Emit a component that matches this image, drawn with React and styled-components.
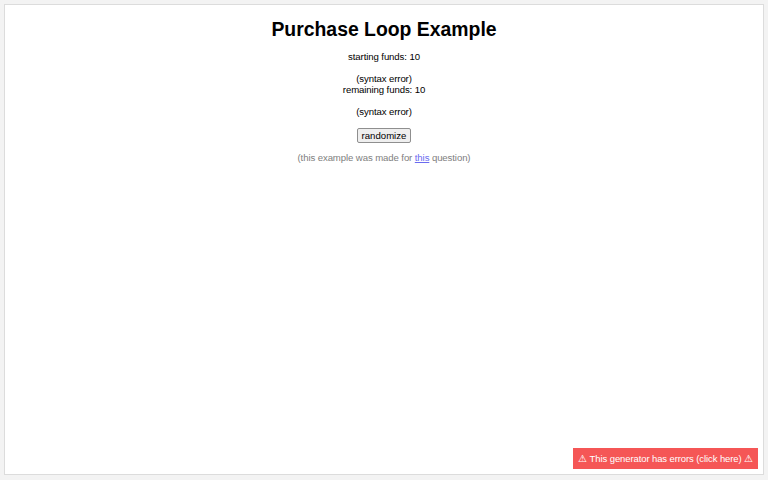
import React from 'react';
import styled, { createGlobalStyle } from 'styled-components';

const Global = createGlobalStyle`
    html, body {
        margin: 0;
        padding: 0;
        background: #f3f3f3;
        font-family: "Liberation Sans", Arial, sans-serif;
    }
`

const Page = styled.div`
    box-sizing: border-box;
    height: 100vh;
    padding: 4px 4px 5px 4px;
`

const Panel = styled.div`
    box-sizing: border-box;
    height: 100%;
    background: #ffffff;
    border: 1px solid #dcdcdc;
    text-align: center;
    padding-top: 13px;
`

const Title = styled.h1`
    margin: 0 0 11px;
    font-size: 19.4px;
    line-height: 22px;
    font-weight: bold;
    color: #000;
`

const Output = styled.div`
    font-size: 9.6px;
    line-height: 11px;
    color: #000;
    letter-spacing: -0.1px;
`

const Button = styled.button`
    margin-top: 11px;
    font-family: "Liberation Sans", Arial, sans-serif;
    font-size: 9.6px;
    line-height: 11px;
    padding: 1px 4px;
    background: #efefef;
    border: 1px solid #8f8f8f;
    border-radius: 2px;
    color: #000;
`

const Note = styled.p`
    margin: 9px 0 0;
    font-size: 9.6px;
    line-height: 11px;
    color: #808080;
    letter-spacing: -0.1px;
`

const Link = styled.a`
    color: #6b6bf0;
    text-decoration: underline;
`

const ErrorBadge = styled.div`
    position: fixed;
    right: 10px;
    bottom: 11px;
    background: #f55656;
    color: #fff;
    font-size: 9.5px;
    line-height: 13px;
    letter-spacing: -0.1px;
    padding: 4px 5px 4px 5px;
    cursor: pointer;
`

const App = () => {
    return (
        <>
            <Global />
            <Page>
                <Panel>
                    <Title>Purchase Loop Example</Title>
                    <Output>
                        starting funds: 10<br /><br />
                        (syntax error)<br />
                        remaining funds: 10<br /><br />
                        (syntax error)<br />
                    </Output>
                    <Button>randomize</Button>
                    <Note>(this example was made for <Link href="#">this</Link> question)</Note>
                </Panel>
            </Page>
            <ErrorBadge>⚠ This generator has errors (click here) ⚠</ErrorBadge>
        </>
    )
}

export default App
